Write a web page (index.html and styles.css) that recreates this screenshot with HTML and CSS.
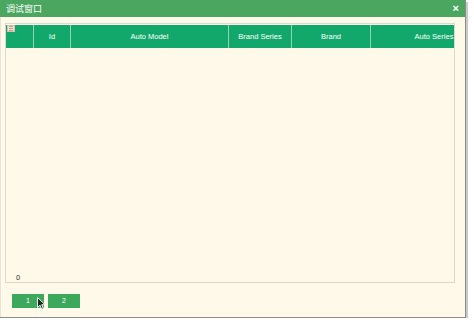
FILE: index.html
```html
<!DOCTYPE html>
<html>
<head>
<meta charset="utf-8">
<link rel="stylesheet" href="styles.css">
</head>
<body>
<div class="window">
  <div class="titlebar">
    <span class="title">调试窗口</span>
    <span class="close">×</span>
  </div>
  <div class="body">
    <div class="grid">
      <div class="header">
        <div class="col c0"><span class="menu"><i></i><i></i><i></i></span></div>
        <div class="col c1">Id</div>
        <div class="col c2">Auto Model</div>
        <div class="col c3">Brand Series</div>
        <div class="col c4">Brand</div>
        <div class="col c5">Auto Series</div>
      </div>
      <div class="rows"></div>
      <div class="footer">0</div>
    </div>
    <div class="pager">
      <button class="btn">1</button>
      <button class="btn">2</button>
      <svg class="cursor" width="9" height="13" viewBox="0 0 9 13"><path d="M0.5 0.5 L0.5 10.5 L3 8.2 L4.8 12.3 L6.4 11.6 L4.7 7.7 L8 7.7 Z" fill="#222" stroke="#fff" stroke-width="0.9"/></svg>
    </div>
  </div>
</div>
</body>
</html>
```

FILE: styles.css
```css
html, body {
  margin: 0;
  padding: 0;
  background: #ffffff;
}
body {
  font-family: "Liberation Sans", Arial, "Noto Sans CJK SC", sans-serif;
}
.window {
  width: 466px;
  height: 318px;
  background: #fef9e8;
  border-right: 1px solid #8c8c8c;
  border-bottom: 1px solid #8c8c8c;
  box-shadow: 2px 2px 0 #c9c9c9;
  display: flex;
  flex-direction: column;
  box-sizing: border-box;
}
.titlebar {
  height: 17px;
  background: #4ba760;
  display: flex;
  align-items: center;
  justify-content: space-between;
  padding: 0 6px 0 6px;
  color: #ffffff;
  flex: none;
}
.title {
  font-size: 9px;
  font-family: "Noto Sans CJK SC", sans-serif;
  line-height: 1;
}
.close {
  font-size: 11px;
  font-weight: bold;
  line-height: 1;
}
.body {
  flex: 1;
  padding: 6px 0 0 5px;
  display: flex;
  flex-direction: column;
  border-left: 1px solid #e8e2d8;
}
.grid {
  width: 450px;
  height: 260px;
  border: 1px solid #dcd8cc;
  box-sizing: border-box;
  display: flex;
  flex-direction: column;
  overflow: hidden;
  margin-left: -1px;
}
.header {
  height: 23px;
  margin-top: 1px;
  background: #13a86b;
  display: flex;
  flex: none;
  color: #ffffff;
  font-size: 7.5px;
  overflow: hidden;
}
.col {
  flex: none;
  display: flex;
  align-items: center;
  justify-content: center;
  border-right: 1px solid #8fd4b4;
  box-sizing: border-box;
  height: 100%;
}
.c0 { width: 28px; align-items: flex-start; justify-content: flex-start; }
.c1 { width: 37px; }
.c2 { width: 158px; }
.c3 { width: 63px; }
.c4 { width: 79px; }
.c5 { width: 126px; border-right: none; }
.menu {
  display: flex;
  flex-direction: column;
  justify-content: center;
  gap: 1px;
  width: 8px;
  height: 7px;
  margin: 0 0 0 1px;
  background: #f3e4d8;
  border: 1px solid #d8c2b4;
  box-sizing: border-box;
  padding: 0 1px;
}
.menu i {
  display: block;
  height: 1px;
  background: #c99c8c;
}
.rows {
  flex: 1;
}
.footer {
  height: 10px;
  font-size: 7.5px;
  color: #333;
  padding-left: 10px;
  line-height: 11px;
  flex: none;
}
.pager {
  display: flex;
  gap: 4px;
  padding: 11px 0 0 6px;
  position: relative;
}
.btn {
  width: 32px;
  height: 14px;
  border: none;
  padding: 0;
  background: #3ca85c;
  color: #ffffff;
  font-family: "Liberation Sans", Arial, sans-serif;
  font-size: 7px;
  line-height: 14px;
}
.cursor {
  position: absolute;
  left: 31px;
  top: 14px;
}
```
